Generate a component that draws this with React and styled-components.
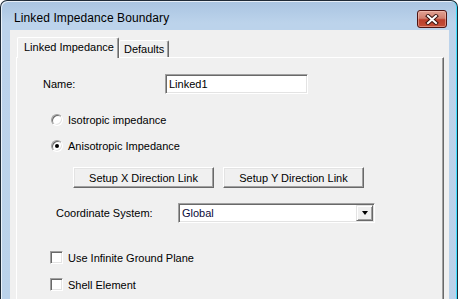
import React from 'react';
import styled, { createGlobalStyle } from 'styled-components';

const GlobalStyle = createGlobalStyle`
  html, body {
    margin: 0;
    padding: 0;
    overflow: hidden;
    background: #ffffff;
  }
`;

const Window = styled.div`
  box-sizing: border-box;
  width: 458px;
  height: 330px;
  display: flex;
  flex-direction: column;
  border: 1px solid #1e2a36;
  border-bottom: none;
  border-radius: 7px 7px 0 0;
  padding: 0 8px 0 9px;
  background: linear-gradient(#a9c4e1 0px, #bcd3eb 22px, #bad2ea 100%);
  box-shadow: inset 1px 1px 0 rgba(255, 255, 255, 0.7), inset -1px 0 0 #3fe0ff;
  font-family: 'Liberation Sans', Arial, sans-serif;
`;

const TitleBar = styled.div`
  height: 29px;
  display: flex;
  align-items: flex-start;
  justify-content: space-between;
`;

const Title = styled.div`
  margin: 10px 0 0 4px;
  font-family: 'Liberation Sans', Arial, sans-serif;
  font-size: 12px;
  color: #000;
  letter-spacing: 0.1px;
`;

const CloseButton = styled.div`
  box-sizing: border-box;
  width: 30px;
  height: 18px;
  margin: 9px 2px 0 0;
  border: 1px solid #4e1412;
  border-radius: 3px;
  background: linear-gradient(#e1a193 0%, #d1806f 45%, #bb3f2c 55%, #c44f38 100%);
  box-shadow: inset 0 0 0 1px rgba(255, 210, 200, 0.45);
  display: flex;
  align-items: center;
  justify-content: center;
`;

const Client = styled.div`
  flex: 1;
  background: #f0f0f0;
  padding: 7px 5px 0 6px;
  display: flex;
  flex-direction: column;
`;

const TabStrip = styled.div`
  display: flex;
  align-items: flex-end;
  height: 20px;
  padding-left: 1px;
  position: relative;
  z-index: 1;
`;

const Tab = styled.div`
  box-sizing: border-box;
  height: ${(p) => (p.$active ? '21px' : '17px')};
  width: ${(p) => p.$w}px;
  margin-bottom: ${(p) => (p.$active ? '-1px' : '0')};
  padding-top: ${(p) => (p.$active ? '3px' : '2px')};
  padding-left: ${(p) => (p.$active ? '6px' : '4px')};
  background: #f0f0f0;
  border-top: 1px solid #ffffff;
  border-left: 1px solid #ffffff;
  border-right: 1px solid #696969;
  border-radius: 2px 2px 0 0;
  box-shadow: inset -1px 0 0 #a0a0a0;
  font-size: 11px;
  color: #000;
  white-space: nowrap;
`;

const Panel = styled.div`
  flex: 1;
  border-top: 1px solid #ffffff;
  border-left: 1px solid #ffffff;
  border-right: 1px solid #696969;
  box-shadow: inset -1px 0 0 #a0a0a0;
  padding: 0 0 0 26px;
  display: flex;
  flex-direction: column;
  font-size: 11px;
  color: #000;
`;

const Row = styled.div`
  display: flex;
  align-items: center;
  height: ${(p) => p.$h || 14}px;
  margin-top: ${(p) => p.$top}px;
  padding-left: ${(p) => p.$indent || 0}px;
  gap: ${(p) => p.$gap || 0}px;
`;

const Label = styled.span`
  width: ${(p) => p.$w}px;
  flex-shrink: 0;
`;

const Sunken = styled.div`
  box-sizing: border-box;
  width: ${(p) => p.$w}px;
  height: 20px;
  background: #ffffff;
  border: 1px solid;
  border-color: #a0a0a0 #ffffff #ffffff #a0a0a0;
  box-shadow: inset 1px 1px 0 #696969, inset -1px -1px 0 #e3e3e3;
  display: flex;
  align-items: center;
  padding: 0 2px 0 3px;
  color: #000;
`;

const SelectText = styled.span`
  flex: 1;
  color: #0b0b3a;
`;

const DropButton = styled.div`
  box-sizing: border-box;
  width: 17px;
  height: 16px;
  margin-right: -1px;
  background: #f0f0f0;
  border: 1px solid;
  border-color: #e3e3e3 #696969 #696969 #e3e3e3;
  box-shadow: inset 1px 1px 0 #ffffff, inset -1px -1px 0 #a0a0a0;
  display: flex;
  align-items: center;
  justify-content: center;
`;

const Arrow = styled.span`
  width: 0;
  height: 0;
  border-left: 3.5px solid transparent;
  border-right: 3.5px solid transparent;
  border-top: 4px solid #000;
`;

const RadioDot = styled.span`
  box-sizing: border-box;
  width: 12px;
  height: 12px;
  border-radius: 50%;
  background: #ffffff;
  border: 1px solid;
  border-color: #a0a0a0 #ffffff #ffffff #a0a0a0;
  box-shadow: inset 1px 1px 0 #696969, inset -1px -1px 0 #e3e3e3;
  display: flex;
  align-items: center;
  justify-content: center;

  &::after {
    content: '';
    width: 4px;
    height: 4px;
    border-radius: 50%;
    background: ${(p) => (p.$checked ? '#000' : 'transparent')};
  }
`;

const CheckBox = styled.span`
  box-sizing: border-box;
  width: 13px;
  height: 13px;
  background: #ffffff;
  border: 1px solid;
  border-color: #a0a0a0 #ffffff #ffffff #a0a0a0;
  box-shadow: inset 1px 1px 0 #696969, inset -1px -1px 0 #e3e3e3;
`;

const Button = styled.div`
  box-sizing: border-box;
  width: 141px;
  height: 21px;
  background: #f0f0f0;
  border: 1px solid;
  border-color: #ffffff #696969 #696969 #ffffff;
  box-shadow: inset -1px -1px 0 #a0a0a0, inset 1px 1px 0 #e3e3e3;
  display: flex;
  align-items: center;
  justify-content: center;
  font-size: 11px;
  color: #000;
`;

function Radio({ checked, children }) {
  return (
    <>
      <RadioDot $checked={checked} />
      <span>{children}</span>
    </>
  );
}

export default function App() {
  return (
    <>
      <GlobalStyle />
      <Window>
        <TitleBar>
          <Title>Linked Impedance Boundary</Title>
          <CloseButton>
            <svg width="14" height="11" viewBox="0 0 14 11">
              <path d="M3 2 L11 9 M11 2 L3 9" stroke="#3a1410" strokeWidth="4" strokeLinecap="square" />
              <path d="M3 2 L11 9 M11 2 L3 9" stroke="#ffffff" strokeWidth="2" strokeLinecap="square" />
            </svg>
          </CloseButton>
        </TitleBar>
        <Client>
          <TabStrip>
            <Tab $active $w={102}>Linked Impedance</Tab>
            <Tab $w={50}>Defaults</Tab>
          </TabStrip>
          <Panel>
            <Row $h={20} $top={16}>
              <Label $w={122}>Name:</Label>
              <Sunken $w={143}>Linked1</Sunken>
            </Row>
            <Row $top={19} $indent={8} $gap={5}>
              <Radio>Isotropic impedance</Radio>
            </Row>
            <Row $top={12} $indent={8} $gap={5}>
              <Radio checked>Anisotropic Impedance</Radio>
            </Row>
            <Row $h={21} $top={14} $indent={30} $gap={9}>
              <Button>Setup X Direction Link</Button>
              <Button>Setup Y Direction Link</Button>
            </Row>
            <Row $h={20} $top={15} $indent={13}>
              <Label $w={122}>Coordinate System:</Label>
              <Sunken $w={197}>
                <SelectText>Global</SelectText>
                <DropButton>
                  <Arrow />
                </DropButton>
              </Sunken>
            </Row>
            <Row $h={13} $top={28} $indent={7} $gap={5}>
              <CheckBox />
              <span>Use Infinite Ground Plane</span>
            </Row>
            <Row $h={13} $top={14} $indent={7} $gap={5}>
              <CheckBox />
              <span>Shell Element</span>
            </Row>
          </Panel>
        </Client>
      </Window>
    </>
  );
}
